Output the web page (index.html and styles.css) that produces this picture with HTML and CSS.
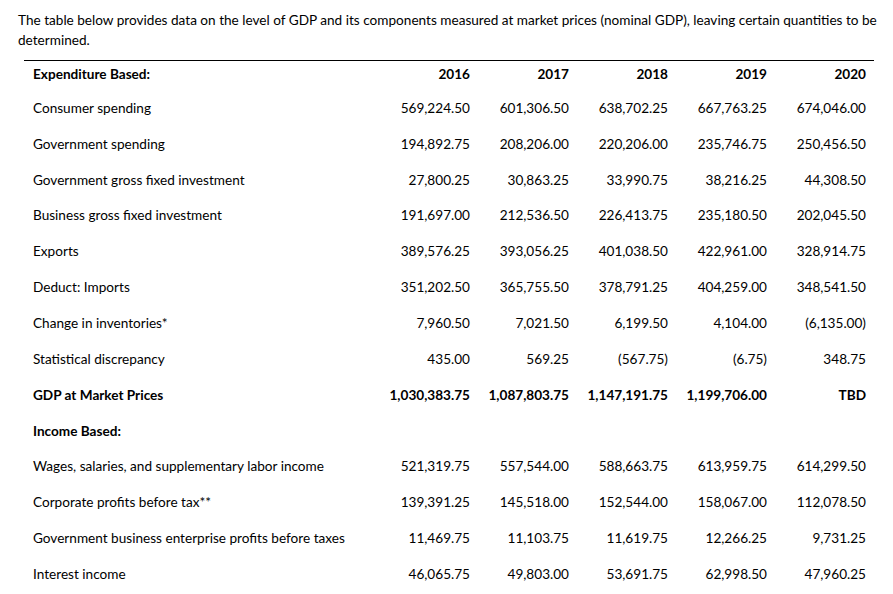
FILE: index.html
```html
<!DOCTYPE html>
<html>
<head>
<meta charset="utf-8">
<link rel="stylesheet" href="styles.css">
</head>
<body>
<div class="page">
  <p class="intro">The table below provides data on the level of GDP and its components measured at market prices (nominal GDP), leaving certain quantities to be determined.</p>
  <table class="gdp">
    <colgroup>
      <col class="c-label"><col class="c-num"><col class="c-num"><col class="c-num"><col class="c-num"><col class="c-num">
    </colgroup>
    <thead>
      <tr class="bold"><th>Expenditure Based:</th><th>2016</th><th>2017</th><th>2018</th><th>2019</th><th>2020</th></tr>
    </thead>
    <tbody>
      <tr><td>Consumer spending</td><td>569,224.50</td><td>601,306.50</td><td>638,702.25</td><td>667,763.25</td><td>674,046.00</td></tr>
      <tr><td>Government spending</td><td>194,892.75</td><td>208,206.00</td><td>220,206.00</td><td>235,746.75</td><td>250,456.50</td></tr>
      <tr><td>Government gross fixed investment</td><td>27,800.25</td><td>30,863.25</td><td>33,990.75</td><td>38,216.25</td><td>44,308.50</td></tr>
      <tr><td>Business gross fixed investment</td><td>191,697.00</td><td>212,536.50</td><td>226,413.75</td><td>235,180.50</td><td>202,045.50</td></tr>
      <tr><td>Exports</td><td>389,576.25</td><td>393,056.25</td><td>401,038.50</td><td>422,961.00</td><td>328,914.75</td></tr>
      <tr><td>Deduct: Imports</td><td>351,202.50</td><td>365,755.50</td><td>378,791.25</td><td>404,259.00</td><td>348,541.50</td></tr>
      <tr><td>Change in inventories*</td><td>7,960.50</td><td>7,021.50</td><td>6,199.50</td><td>4,104.00</td><td>(6,135.00)</td></tr>
      <tr><td>Statistical discrepancy</td><td>435.00</td><td>569.25</td><td>(567.75)</td><td>(6.75)</td><td>348.75</td></tr>
      <tr class="bold"><td>GDP at Market Prices</td><td>1,030,383.75</td><td>1,087,803.75</td><td>1,147,191.75</td><td>1,199,706.00</td><td>TBD</td></tr>
      <tr class="bold"><td>Income Based:</td><td></td><td></td><td></td><td></td><td></td></tr>
      <tr><td>Wages, salaries, and supplementary labor income</td><td>521,319.75</td><td>557,544.00</td><td>588,663.75</td><td>613,959.75</td><td>614,299.50</td></tr>
      <tr><td>Corporate profits before tax**</td><td>139,391.25</td><td>145,518.00</td><td>152,544.00</td><td>158,067.00</td><td>112,078.50</td></tr>
      <tr><td>Government business enterprise profits before taxes</td><td>11,469.75</td><td>11,103.75</td><td>11,619.75</td><td>12,266.25</td><td>9,731.25</td></tr>
      <tr><td>Interest income</td><td>46,065.75</td><td>49,803.00</td><td>53,691.75</td><td>62,998.50</td><td>47,960.25</td></tr>
    </tbody>
  </table>
</div>
</body>
</html>
```
FILE: styles.css
```css
html, body {
  margin: 0;
  padding: 0;
  background: #ffffff;
}
body {
  font-family: Lato, "Open Sans", "Liberation Sans", sans-serif;
  font-size: 13.6px;
  color: #000000;
}
.page {
  padding: 10px 16px 0 18px;
}
.intro {
  margin: 0;
  line-height: 20px;
}
.gdp {
  margin: 10px 0 0 6px;
  width: 850px;
  border-collapse: collapse;
  table-layout: fixed;
  border-top: 1.5px solid #000;
}
.c-label { width: 355px; }
.c-num { width: 99px; }
.gdp th, .gdp td {
  height: 35.85px;
  padding: 0 8px 0 0;
  text-align: right;
  vertical-align: middle;
  white-space: nowrap;
  font-weight: normal;
}
.gdp thead th {
  height: 25px;
  padding-bottom: 4px;
}
.gdp th:first-child, .gdp td:first-child {
  text-align: left;
  padding-left: 9px;
}
.gdp .bold th, .gdp .bold td {
  font-weight: bold;
}
```
